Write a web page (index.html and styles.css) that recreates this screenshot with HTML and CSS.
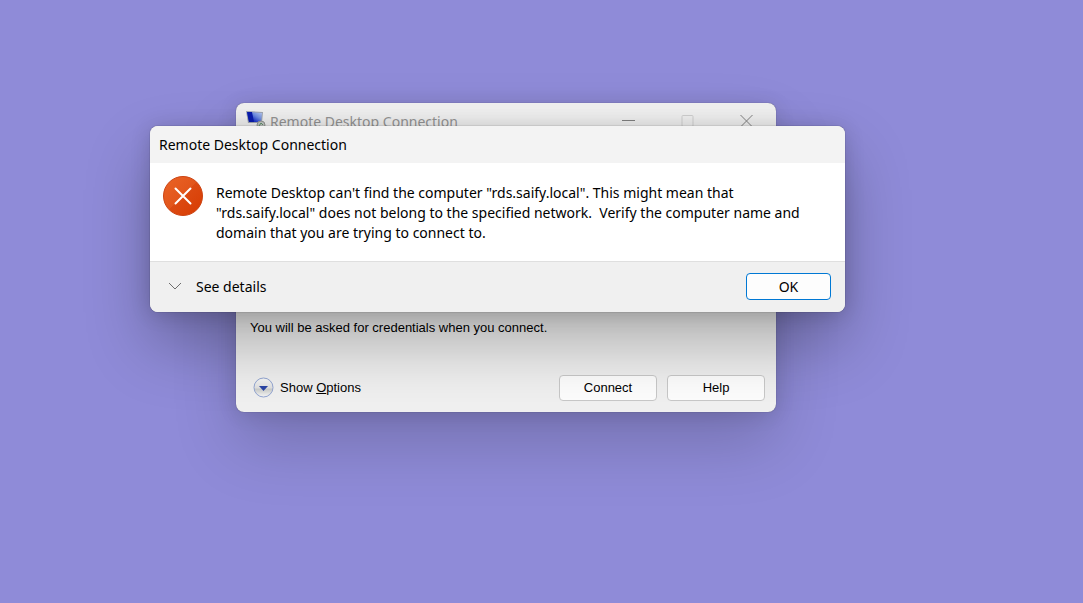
FILE: index.html
```html
<!DOCTYPE html>
<html lang="en">
<head>
  <meta charset="UTF-8">
  <title>Remote Desktop Connection</title>
  <link rel="stylesheet" href="styles.css">
</head>
<body>
  <div class="desktop">

    <section class="window main-window">
      <header class="titlebar">
        <svg class="app-icon" width="20" height="20" viewBox="0 0 20 20">
          <defs>
            <linearGradient id="screen" x1="0" y1="1" x2="1" y2="0">
              <stop offset="0.3" stop-color="#2038cc"/>
              <stop offset="0.6" stop-color="#6f8ee4"/>
              <stop offset="1" stop-color="#bccdf2"/>
            </linearGradient>
          </defs>
          <path d="M0 0l17 1-1 11-14 0z" fill="#a0a6b2"/>
          <path d="M1 1l15 1-1 9-12 0z" fill="url(#screen)"/>
          <path d="M1 1l5 0 2 10-5 0z" fill="#0a1cae"/>
          <circle cx="15" cy="14" r="4" fill="#c2c6c3" stroke="#939793"/>
          <path d="M13 15l2-3 2 2" fill="none" stroke="#5f8f6a"/>
        </svg>
        <h2>Remote Desktop Connection</h2>
        <div class="controls">
          <button aria-label="Minimize"><svg width="13" height="13" viewBox="0 0 13 13"><path d="M0 5.5h13"/></svg></button>
          <button class="off" aria-label="Maximize" disabled><svg width="13" height="13" viewBox="0 0 13 13"><rect x="1" y=".5" width="11" height="11" rx="1"/></svg></button>
          <button aria-label="Close"><svg width="13" height="13" viewBox="0 0 13 13"><path d="M.5 0l12 12M12.5 0L.5 12"/></svg></button>
        </div>
      </header>
      <div class="main-body">
        <p>You will be asked for credentials when you connect.</p>
        <div class="main-footer">
          <button class="show-options">
            <svg width="22" height="22" viewBox="0 0 22 22">
              <defs>
                <linearGradient id="knob" x1="0" y1="0" x2="0" y2="1">
                  <stop offset="0" stop-color="#f8f8f8"/>
                  <stop offset="0.5" stop-color="#e2e2e2"/>
                  <stop offset="0.6" stop-color="#cccecc"/>
                  <stop offset="1" stop-color="#f8f8f8"/>
                </linearGradient>
              </defs>
              <circle cx="11.5" cy="10.5" r="9.5" fill="url(#knob)" stroke="#93a6d2"/>
              <path d="M7 9h9l-4.500 5z" fill="#2b45a5"/>
            </svg>
            <span>Show <u>O</u>ptions</span>
          </button>
          <button class="btn">Connect</button>
          <button class="btn">Help</button>
        </div>
      </div>
    </section>

    <section class="window error-dialog">
      <header class="dialog-title">
        <h2>Remote Desktop Connection</h2>
      </header>
      <div class="message">
        <svg class="error-icon" width="40" height="40" viewBox="0 0 40 40">
          <defs>
            <linearGradient id="red" x1="0" y1="0" x2="1" y2="1">
              <stop offset="0" stop-color="#ea6426"/>
              <stop offset="0.5" stop-color="#e2551b"/>
              <stop offset="0.5" stop-color="#dc4a12"/>
              <stop offset="1" stop-color="#d83b01"/>
            </linearGradient>
          </defs>
          <circle cx="20" cy="20" r="19.5" fill="url(#red)" stroke="#cc4413"/>
          <path d="M12.5 12.5l15 15M27.5 12.5l-15 15" stroke="#fff" stroke-width="2" stroke-linecap="round"/>
        </svg>
        <p>Remote Desktop can't find the computer "rds.saify.local". This might mean that<br>
          "rds.saify.local" does not belong to the specified network.&nbsp; Verify the computer name and<br>
          domain that you are trying to connect to.</p>
      </div>
      <footer class="dialog-footer">
        <button class="details">
          <svg width="14" height="8" viewBox="0 0 14 8"><path d="M1 1l6 6 6-6"/></svg>
          See details
        </button>
        <button class="ok">OK</button>
      </footer>
    </section>

  </div>
</body>
</html>
```

FILE: styles.css
```css
* {
  box-sizing: border-box;
}
body {
  margin: 0;
  background-color: #8f8bd8;
  color: black;
  font-family: "Noto Sans", "Open Sans", sans-serif;
  font-size: 14px;
}
.desktop {
  position: relative;
  min-height: 100vh;
  overflow: hidden;
}
.window {
  position: absolute;
  display: flex;
  flex-direction: column;
  border-radius: 8px;
}
h2, p {
  margin: 0;
  font-size: inherit;
  font-weight: normal;
}
button {
  padding: 0;
  border: none;
  background: none;
  color: inherit;
  font: inherit;
}

/* connection window */
.main-window {
  left: 236px;
  top: 103px;
  width: 540px;
  height: 309px;
  background: #f0f0f0;
  box-shadow: 0 0 1px rgba(0, 0, 0, 0.5), 0 2px 20px rgba(0, 0, 0, 0.12), 0 32px 64px rgba(0, 0, 0, 0.18);
}
.titlebar {
  display: flex;
  align-items: center;
  height: 36px;
  padding-left: 10px;
  color: #949494;
}
.titlebar h2 {
  flex: 1;
  margin-left: 4px;
}
.controls {
  display: flex;
}
.controls button {
  width: 59px;
  height: 36px;
}
.controls svg {
  display: block;
  margin: auto;
  fill: none;
  stroke: #808080;
}
.controls .off svg {
  stroke: #d0d0d0;
}
.main-body {
  flex: 1;
  display: flex;
  flex-direction: column;
  justify-content: flex-end;
  gap: 38px;
  padding: 0 11px 11px 14px;
  font-family: "Liberation Sans", Arial, sans-serif;
  font-size: 13px;
  line-height: 18px;
}
.main-footer {
  display: flex;
  align-items: center;
  gap: 10px;
}
.show-options {
  display: flex;
  align-items: center;
  gap: 6px;
  margin-left: 2px;
  margin-right: auto;
}
.btn {
  width: 98px;
  height: 26px;
  border: 1px solid #c8c8c8;
  border-radius: 4px;
  background: #fdfdfd;
}

/* error message */
.error-dialog {
  left: 150px;
  top: 126px;
  width: 695px;
  background: white;
  box-shadow: 0 0 1px rgba(0, 0, 0, 0.7), 0 2px 20px rgba(0, 0, 0, 0.16), 0 32px 64px rgba(0, 0, 0, 0.28);
}
.dialog-title {
  height: 37px;
  padding: 0 9px;
  border-radius: 8px 8px 0 0;
  background: #f3f3f3;
  line-height: 37px;
}
.message {
  display: flex;
  gap: 13px;
  padding: 13px 13px 18px;
  line-height: 20px;
}
.message p {
  padding-top: 7px;
  white-space: nowrap;
}
.error-icon {
  flex: none;
}
.dialog-footer {
  display: flex;
  align-items: center;
  justify-content: space-between;
  height: 51px;
  padding: 0 14px 2px 18px;
  border-top: 1px solid #dfdfdf;
  border-radius: 0 0 8px 8px;
  background: #f0f0f0;
}
.details {
  display: flex;
  align-items: center;
  gap: 14px;
}
.details svg {
  fill: none;
  stroke: #6e6e6e;
}
.ok {
  width: 85px;
  height: 27px;
  border: 1px solid #0078d4;
  border-radius: 4px;
  background: #fdfdfd;
}
```
